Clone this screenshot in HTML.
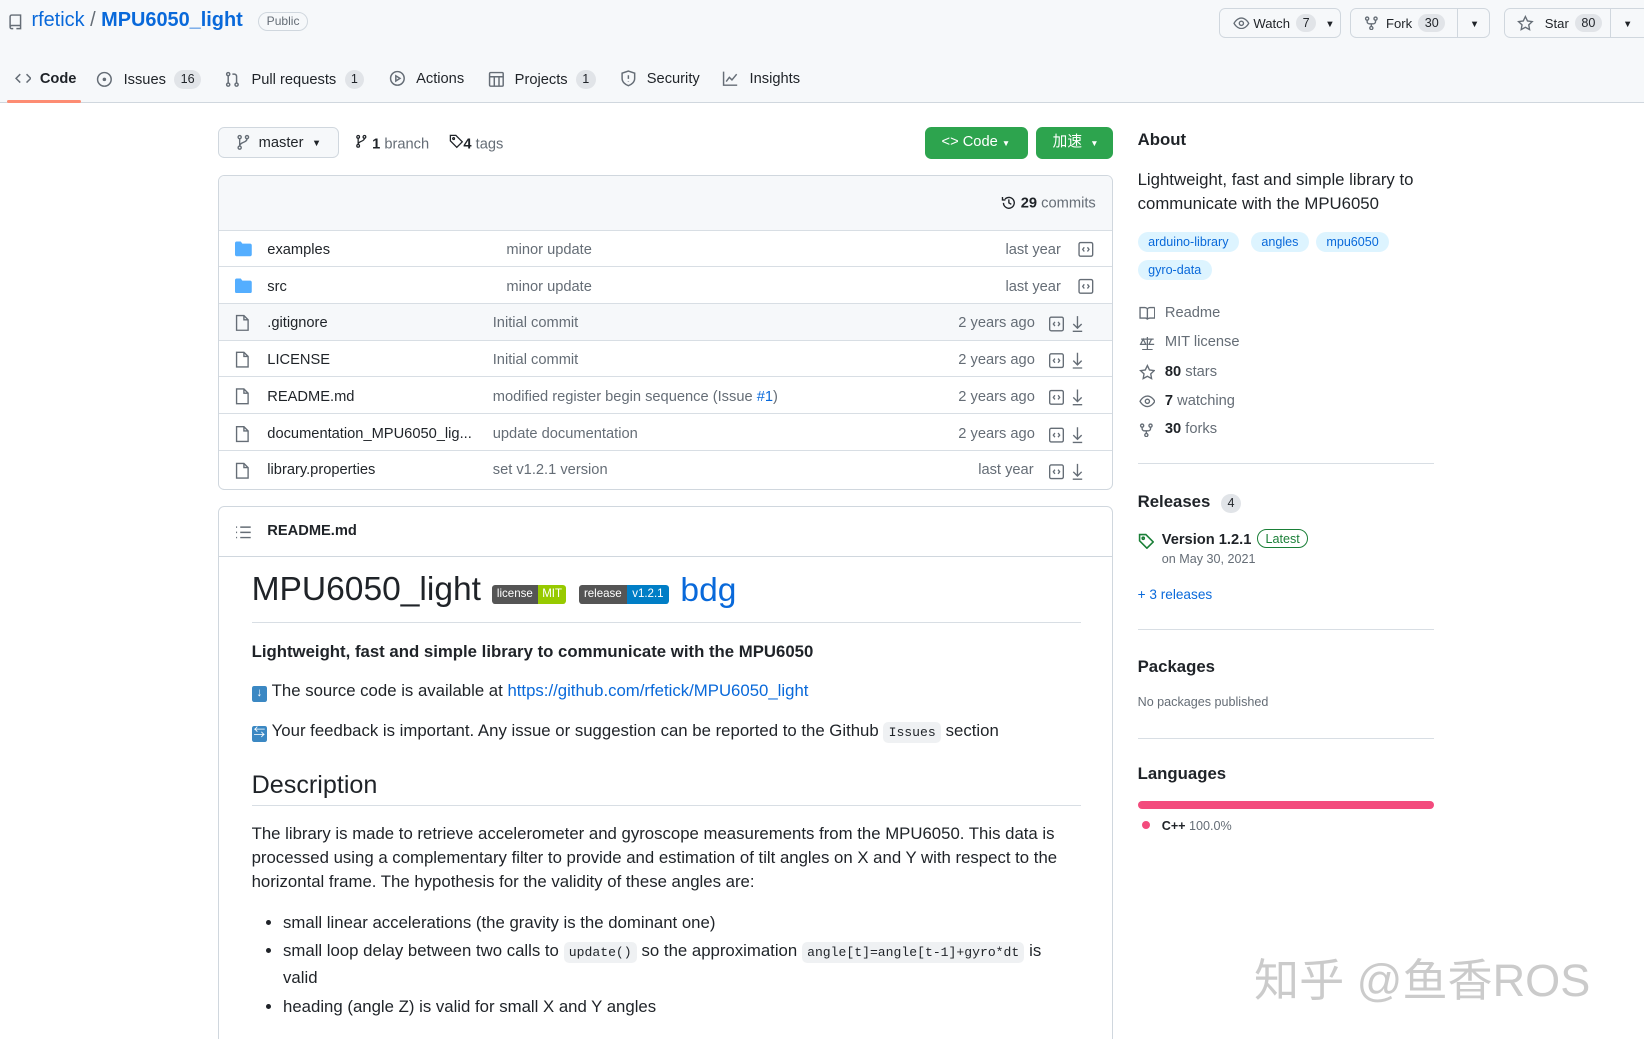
<!DOCTYPE html>
<html><head><meta charset="utf-8"><style>
*{box-sizing:border-box;margin:0;padding:0}
html,body{width:1644px;height:1039px;overflow:hidden;background:#fff}
#w{zoom:1.0485;position:relative;width:1568px;height:991px;font-family:"Liberation Sans","Noto Sans CJK SC",sans-serif;color:#1f2328;font-size:14px}
.a{position:absolute;white-space:nowrap}
.hdr{position:absolute;left:0;top:0;width:1568px;height:98px;background:#f6f8fa;border-bottom:1px solid #d0d7de}
.btn{position:absolute;border:1px solid #d0d7de;border-radius:6px;background:#f6f8fa;height:28px;font-size:12.5px;display:flex;align-items:center}
.cnt{display:inline-block;background:#e1e4e8;border-radius:10px;padding:0 6px;font-size:12px;line-height:18px;margin-left:6px}
.tab{position:absolute;top:67px;font-size:14px;display:flex;align-items:center;gap:6px;color:#1f2328}
.tab svg{stroke:#656d76;fill:none;stroke-width:1.4}
.box{position:absolute;border:1px solid #d0d7de;border-radius:6px;background:#fff}
.row{position:absolute;left:0;width:852px;height:35px;border-top:1px solid #d8dee4;font-size:14px}
.row span{position:absolute;top:11px}
.msg{color:#656d76}
.ic{position:absolute;top:10px}
.blue{color:#0969da}
.topic{position:absolute;background:#ddf4ff;color:#0969da;border-radius:12px;font-size:12px;padding:3px 10px}
.sl{position:absolute;left:1111px;font-size:14px;color:#656d76}
.sic{position:absolute;left:1086px}
.sep{position:absolute;left:1085px;width:283px;height:1px;background:#d8dee4}
h3{position:absolute;font-size:16px;font-weight:bold}
code{font-family:"Liberation Mono",monospace;font-size:12.5px;background:#eff1f3;border-radius:5px;padding:3px 5px}
</style></head><body><div id="w">
<div class="hdr"></div>
<svg class="a" style="left:8px;top:13px" width="14" height="16" viewBox="0 0 14 16" fill="none" stroke="#656d76" stroke-width="1.4"><path d="M2 2.5a1.5 1.5 0 0 1 1.5-1.5H12v10H3.5A1.5 1.5 0 0 0 2 12.5zM2 12.5A1.5 1.5 0 0 0 3.5 14H5M8 14h4v-3"/></svg>
<div class="a" style="left:30px;top:9px;font-size:19px;color:#0969da">rfetick <span style="color:#656d76">/</span> <b>MPU6050_light</b></div>
<div class="a" style="left:246px;top:11px;height:19px;width:48px;border:1px solid #d0d7de;border-radius:10px;font-size:11.5px;color:#656d76;text-align:center;line-height:17px">Public</div>
<div class="btn" style="left:1163px;top:8px;width:116px;padding-left:12px"><svg width="16" height="12" viewBox="0 0 16 12" fill="none" stroke="#656d76" stroke-width="1.3"><path d="M1 6s2.5-5 7-5 7 5 7 5-2.5 5-7 5-7-5-7-5z"/><circle cx="8" cy="6" r="2"/></svg>&nbsp;Watch<span class="cnt">7</span><span style="margin-left:9px;font-size:9px">▼</span></div>
<div class="btn" style="left:1288px;top:8px;width:133px;padding-left:12px"><svg width="14" height="14" viewBox="0 0 14 14" fill="none" stroke="#656d76" stroke-width="1.3"><circle cx="3" cy="2.5" r="1.5"/><circle cx="11" cy="2.5" r="1.5"/><circle cx="7" cy="11.5" r="1.5"/><path d="M3 4v1.5c0 1 1 2 2 2h4c1 0 2-1 2-2V4M7 7.5V10"/></svg>&nbsp;&nbsp;Fork<span class="cnt">30</span><span style="position:absolute;left:101px;top:0;height:26px;border-left:1px solid #d0d7de"></span><span style="position:absolute;left:113px;font-size:9px">▼</span></div>
<div class="btn" style="left:1434px;top:8px;width:140px;padding-left:12px"><svg width="16" height="16" viewBox="0 0 16 16" fill="none" stroke="#656d76" stroke-width="1.3"><path d="M8 1.5l2 4.2 4.5.6-3.3 3.1.8 4.5L8 11.7l-4 2.2.8-4.5L1.5 6.3 6 5.7z"/></svg>&nbsp;&nbsp;&nbsp;Star<span class="cnt">80</span><span style="position:absolute;left:101px;top:0;height:26px;border-left:1px solid #d0d7de"></span><span style="position:absolute;left:113px;font-size:9px">▼</span></div>

<div class="tab" style="left:14px"><svg width="16" height="16" viewBox="0 0 16 16"><path d="M5 4L1 8l4 4M11 4l4 4-4 4"/></svg><b style="margin-left:2px">Code</b></div>
<div class="a" style="left:7px;top:95px;width:70px;height:3px;background:#fd8c73;border-radius:2px"></div>
<div class="tab" style="left:92px"><svg width="16" height="16" viewBox="0 0 16 16"><circle cx="8" cy="8" r="6.5"/><circle cx="8" cy="8" r="1" fill="#656d76"/></svg>&nbsp;Issues<span class="cnt" style="margin-left:2px">16</span></div>
<div class="tab" style="left:214px"><svg width="16" height="16" viewBox="0 0 16 16"><circle cx="4" cy="3" r="1.5"/><circle cx="4" cy="13" r="1.5"/><circle cx="12" cy="13" r="1.5"/><path d="M4 4.5v7M12 11.5V5c0-1-1-2-2-2H8"/></svg>&nbsp;Pull requests<span class="cnt" style="margin-left:2px">1</span></div>
<div class="tab" style="left:371px"><svg width="16" height="16" viewBox="0 0 16 16"><circle cx="8" cy="8" r="6.5"/><path d="M6.5 5.5v5l4-2.5z"/></svg>&nbsp;Actions</div>
<div class="tab" style="left:465px"><svg width="16" height="16" viewBox="0 0 16 16"><rect x="1.5" y="1.5" width="13" height="13" rx="1"/><path d="M1.5 5.5h13M6 5.5v9M10.5 5.5v9"/></svg>&nbsp;Projects<span class="cnt" style="margin-left:2px">1</span></div>
<div class="tab" style="left:591px"><svg width="16" height="16" viewBox="0 0 16 16"><path d="M8 1l6 2v5c0 3.5-3 6-6 7-3-1-6-3.5-6-7V3z"/><path d="M8 5v3.5M8 10.5v.5"/></svg>&nbsp;Security</div>
<div class="tab" style="left:689px"><svg width="16" height="16" viewBox="0 0 16 16"><path d="M1.5 1.5v13h13M4 11l3-4 2.5 2.5L14 4"/></svg>&nbsp;Insights</div>

<div class="btn" style="left:208px;top:121px;width:115px;height:30px;padding-left:16px;font-size:14px"><svg width="14" height="16" viewBox="0 0 14 16" fill="none" stroke="#656d76" stroke-width="1.3"><circle cx="3.5" cy="3" r="1.5"/><circle cx="3.5" cy="13" r="1.5"/><circle cx="10.5" cy="3" r="1.5"/><path d="M3.5 4.5v7M10.5 4.5c0 4-7 3-7 7"/></svg>&nbsp;&nbsp;master<span style="margin-left:8px;font-size:9px">▼</span></div>
<div class="a" style="left:339px;top:128px;color:#656d76"><svg width="12" height="14" viewBox="0 0 14 16" fill="none" stroke="#1f2328" stroke-width="1.4"><circle cx="3.5" cy="3" r="1.5"/><circle cx="3.5" cy="13" r="1.5"/><circle cx="10.5" cy="3" r="1.5"/><path d="M3.5 4.5v7M10.5 4.5c0 4-7 3-7 7"/></svg> <b style="color:#1f2328">1</b> branch</div>
<div class="a" style="left:428px;top:128px;color:#656d76"><svg width="14" height="14" viewBox="0 0 16 16" fill="none" stroke="#1f2328" stroke-width="1.4"><path d="M1.5 1.5h6l7 7-6 6-7-7z"/><circle cx="5" cy="5" r="1"/></svg><b style="color:#1f2328">4</b> tags</div>
<div class="a" style="left:882px;top:121px;width:98px;height:31px;background:#2da44e;border-radius:6px;color:#fff;line-height:30px;padding-left:16px;font-size:14px">&lt;&gt; Code <span style="font-size:8px">▼</span></div>
<div class="a" style="left:988px;top:121px;width:74px;height:31px;background:#2da44e;border-radius:6px;color:#fff;line-height:30px;padding-left:16px;font-size:14px">加速 <span style="font-size:8px;margin-left:4px">▼</span></div>

<div class="box" style="left:208px;top:167px;width:854px;height:300px;overflow:hidden">
<div style="position:absolute;left:0;top:0;width:852px;height:51px;background:#f6f8fa"></div>
<div class="a" style="right:16px;top:18px;color:#656d76"><svg width="15" height="15" viewBox="0 0 16 16" fill="none" stroke="#1f2328" stroke-width="1.4" style="vertical-align:-3px"><path d="M2.5 8a5.5 5.5 0 1 0 1.6-3.9M1.5 2v3h3M8 4.5V8l2.5 1.5"/></svg> <b style="color:#1f2328">29</b> commits</div>
<div class="row" style="top:51px"><svg class="ic" style="left:15px" width="16" height="15" viewBox="0 0 16 14"><path d="M0 1.5C0 .7.7 0 1.5 0h4l1.5 2h7.5c.8 0 1.5.7 1.5 1.5v9c0 .8-.7 1.5-1.5 1.5h-13C.7 14 0 13.3 0 12.5z" fill="#54aeff"/></svg><span style="left:46px">examples</span><span class="msg" style="left:274px">minor update</span><span class="msg" style="left:750px">last year</span><svg class="ic" style="left:819px" width="15" height="16" viewBox="0 0 15 16" fill="none" stroke="#656d76" stroke-width="1.3"><rect x="1" y="1.5" width="13" height="13" rx="1.5"/><path d="M6 6L4.5 8 6 10M9 6l1.5 2L9 10"/></svg></div>
<div class="row" style="top:86px"><svg class="ic" style="left:15px" width="16" height="15" viewBox="0 0 16 14"><path d="M0 1.5C0 .7.7 0 1.5 0h4l1.5 2h7.5c.8 0 1.5.7 1.5 1.5v9c0 .8-.7 1.5-1.5 1.5h-13C.7 14 0 13.3 0 12.5z" fill="#54aeff"/></svg><span style="left:46px">src</span><span class="msg" style="left:274px">minor update</span><span class="msg" style="left:750px">last year</span><svg class="ic" style="left:819px" width="15" height="16" viewBox="0 0 15 16" fill="none" stroke="#656d76" stroke-width="1.3"><rect x="1" y="1.5" width="13" height="13" rx="1.5"/><path d="M6 6L4.5 8 6 10M9 6l1.5 2L9 10"/></svg></div>
<div class="row" style="top:121px;background:#f6f8fa"><span style="left:46px">.gitignore</span><span class="msg" style="left:261px">Initial commit</span><span class="msg" style="left:705px">2 years ago</span></div>
<div class="row" style="top:156px"><span style="left:46px">LICENSE</span><span class="msg" style="left:261px">Initial commit</span><span class="msg" style="left:705px">2 years ago</span></div>
<div class="row" style="top:191px"><span style="left:46px">README.md</span><span class="msg" style="left:261px">modified register begin sequence (Issue <span class="blue" style="position:static">#1</span>)</span><span class="msg" style="left:705px">2 years ago</span></div>
<div class="row" style="top:226px"><span style="left:46px">documentation_MPU6050_lig...</span><span class="msg" style="left:261px">update documentation</span><span class="msg" style="left:705px">2 years ago</span></div>
<div class="row" style="top:261px"><span style="left:46px">library.properties</span><span class="msg" style="left:261px">set v1.2.1 version</span><span class="msg" style="left:724px">last year</span></div>
</div>
<svg class="a" style="left:224px;top:299px" width="850" height="170">
<g fill="none" stroke="#656d76" stroke-width="1.3">
<g id="f"><path d="M1.5 1.5h7l4 4v10h-11z M8.5 1.5v4h4"/></g>
<use href="#f" y="35"/><use href="#f" y="70"/><use href="#f" y="106"/><use href="#f" y="141"/>
<g id="c" transform="translate(776,2)"><rect x="1" y="1" width="13" height="13" rx="1.5"/><path d="M6 5.5L4.5 7.5 6 9.5M9 5.5l1.5 2L9 9.5"/><path d="M27.5 0v11M23.5 7.5l4 4 4-4M23 14.5h9"/></g>
<use href="#c" y="35"/><use href="#c" y="70"/><use href="#c" y="106"/><use href="#c" y="141"/>
</g></svg>

<div class="box" style="left:208px;top:483px;width:854px;height:520px">
<div style="position:absolute;left:0;top:0;width:852px;height:47px;border-bottom:1px solid #d0d7de"></div>
<svg class="a" style="left:15px;top:17px" width="16" height="14" viewBox="0 0 16 14" stroke="#656d76" stroke-width="1.4"><path d="M1 2h1M1 7h1M1 12h1M5 2h10M5 7h10M5 12h10"/></svg>
<div class="a" style="left:46px;top:15px;font-weight:bold">README.md</div>
<div class="a" style="left:31px;top:61px;font-size:32px">MPU6050_light</div>
<div class="a" style="left:260px;top:74px;height:18px;font-size:11px;color:#fff;display:flex;border-radius:3px;overflow:hidden;line-height:18px"><span style="background:#555;padding:0 5px">license</span><span style="background:#97ca00;padding:0 4px">MIT</span></div>
<div class="a" style="left:343px;top:74px;height:18px;font-size:11px;color:#fff;display:flex;border-radius:3px;overflow:hidden;line-height:18px"><span style="background:#555;padding:0 5px">release</span><span style="background:#007ec6;padding:0 5px">v1.2.1</span></div>
<div class="a" style="left:440px;top:62px;font-size:32px;color:#0969da">bdg</div>
<div class="a" style="left:31px;top:109px;width:791px;height:1px;background:#d8dee4"></div>
<div class="a" style="left:31px;top:128px;font-size:16px;font-weight:bold">Lightweight, fast and simple library to communicate with the MPU6050</div>
<div class="a" style="left:31px;top:166px;font-size:16px"><span style="display:inline-block;width:15px;height:15px;background:#3b88c3;color:#fff;font-size:11px;text-align:center;line-height:15px;border-radius:2px">↓</span> The source code is available at <span class="blue">https://github.com/rfetick/MPU6050_light</span></div>
<div class="a" style="left:31px;top:204px;font-size:16px"><span style="display:inline-block;width:15px;height:15px;background:#3b88c3;color:#fff;font-size:11px;text-align:center;line-height:15px;border-radius:2px">⇆</span> Your feedback is important. Any issue or suggestion can be reported to the Github <code>Issues</code> section</div>
<div class="a" style="left:31px;top:251px;font-size:24px">Description</div>
<div class="a" style="left:31px;top:284px;width:791px;height:1px;background:#d8dee4"></div>
<div class="a" style="left:31px;top:300px;font-size:16px;line-height:23px;white-space:normal;width:795px">The library is made to retrieve accelerometer and gyroscope measurements from the MPU6050. This data is processed using a complementary filter to provide and estimation of tilt angles on X and Y with respect to the horizontal frame. The hypothesis for the validity of these angles are:</div>
<ul class="a" style="left:61px;top:384px;font-size:16px;line-height:24px;white-space:normal;width:760px">
<li>small linear accelerations (the gravity is the dominant one)</li>
<li style="margin-top:3px">small loop delay between two calls to <code>update()</code> so the approximation <code>angle[t]=angle[t-1]+gyro*dt</code> is valid</li>
<li style="margin-top:3px">heading (angle Z) is valid for small X and Y angles</li></ul>
</div>

<h3 style="left:1085px;top:124px">About</h3>
<div class="a" style="left:1085px;top:160px;font-size:16px;line-height:23px;white-space:normal;width:290px">Lightweight, fast and simple library to communicate with the MPU6050</div>
<div class="topic" style="left:1085px;top:221px">arduino-library</div>
<div class="topic" style="left:1193px;top:221px">angles</div>
<div class="topic" style="left:1255px;top:221px">mpu6050</div>
<div class="topic" style="left:1085px;top:248px">gyro-data</div>
<svg class="sic" style="top:292px" width="16" height="14" viewBox="0 0 16 14" fill="none" stroke="#656d76" stroke-width="1.3"><path d="M1 1.5h4.5c1.5 0 2.5 1 2.5 2V13c0-1-1-1.5-2-1.5H1zM15 1.5h-4.5C9 1.5 8 2.5 8 3.5"/><path d="M15 1.5v10h-4.5c-1 0-2.5.5-2.5 1.5"/></svg>
<div class="sl" style="top:291px">Readme</div>
<svg class="sic" style="top:320px" width="16" height="14" viewBox="0 0 16 14" fill="none" stroke="#656d76" stroke-width="1.2"><path d="M8 1v12M3 13h10M2 3h12M4 3L1.5 8h5zM12 3l-2.5 5h5"/></svg>
<div class="sl" style="top:319px">MIT license</div>
<svg class="sic" style="top:347px" width="16" height="16" viewBox="0 0 16 16" fill="none" stroke="#656d76" stroke-width="1.3"><path d="M8 1.5l2 4.2 4.5.6-3.3 3.1.8 4.5L8 11.7l-4 2.2.8-4.5L1.5 6.3 6 5.7z"/></svg>
<div class="sl" style="top:347px"><b style="color:#1f2328">80</b> stars</div>
<svg class="sic" style="top:377px" width="16" height="12" viewBox="0 0 16 12" fill="none" stroke="#656d76" stroke-width="1.3"><path d="M1 6s2.5-5 7-5 7 5 7 5-2.5 5-7 5-7-5-7-5z"/><circle cx="8" cy="6" r="2"/></svg>
<div class="sl" style="top:375px"><b style="color:#1f2328">7</b> watching</div>
<svg class="sic" style="top:403px" width="14" height="14" viewBox="0 0 14 14" fill="none" stroke="#656d76" stroke-width="1.3"><circle cx="3" cy="2.5" r="1.5"/><circle cx="11" cy="2.5" r="1.5"/><circle cx="7" cy="11.5" r="1.5"/><path d="M3 4v1.5c0 1 1 2 2 2h4c1 0 2-1 2-2V4M7 7.5V10"/></svg>
<div class="sl" style="top:402px"><b style="color:#1f2328">30</b> forks</div>
<div class="sep" style="top:442px"></div>
<h3 style="left:1085px;top:469px">Releases <span class="cnt" style="font-weight:normal">4</span></h3>
<svg class="a" style="left:1085px;top:508px" width="16" height="16" viewBox="0 0 16 16" fill="none" stroke="#1a7f37" stroke-width="1.5"><path d="M1.5 1.5h6l7 7-6 6-7-7z"/><circle cx="5" cy="5" r="1"/></svg>
<div class="a" style="left:1108px;top:507px;font-size:14px;font-weight:bold">Version 1.2.1</div>
<div class="a" style="left:1199px;top:505px;border:1px solid #1a7f37;color:#1a7f37;border-radius:10px;font-size:12px;padding:1px 7px">Latest</div>
<div class="a" style="left:1108px;top:526px;font-size:12px;color:#656d76">on May 30, 2021</div>
<div class="a blue" style="left:1085px;top:560px;font-size:13px">+ 3 releases</div>
<div class="sep" style="top:600px"></div>
<h3 style="left:1085px;top:627px">Packages</h3>
<div class="a" style="left:1085px;top:663px;font-size:12px;color:#656d76">No packages published</div>
<div class="sep" style="top:704px"></div>
<h3 style="left:1085px;top:729px">Languages</h3>
<div class="a" style="left:1085px;top:764px;width:283px;height:8px;border-radius:4px;background:#f34b7d"></div>
<div class="a" style="left:1089px;top:783px;width:8px;height:8px;border-radius:50%;background:#f34b7d"></div>
<div class="a" style="left:1108px;top:781px;font-size:12px;font-weight:bold">C++ <span style="font-weight:normal;color:#656d76">100.0%</span></div>
<div class="a" style="left:1196px;top:900px;font-size:43px;color:rgba(160,160,160,0.55)">知乎 @鱼香ROS</div>
</div></body></html>
